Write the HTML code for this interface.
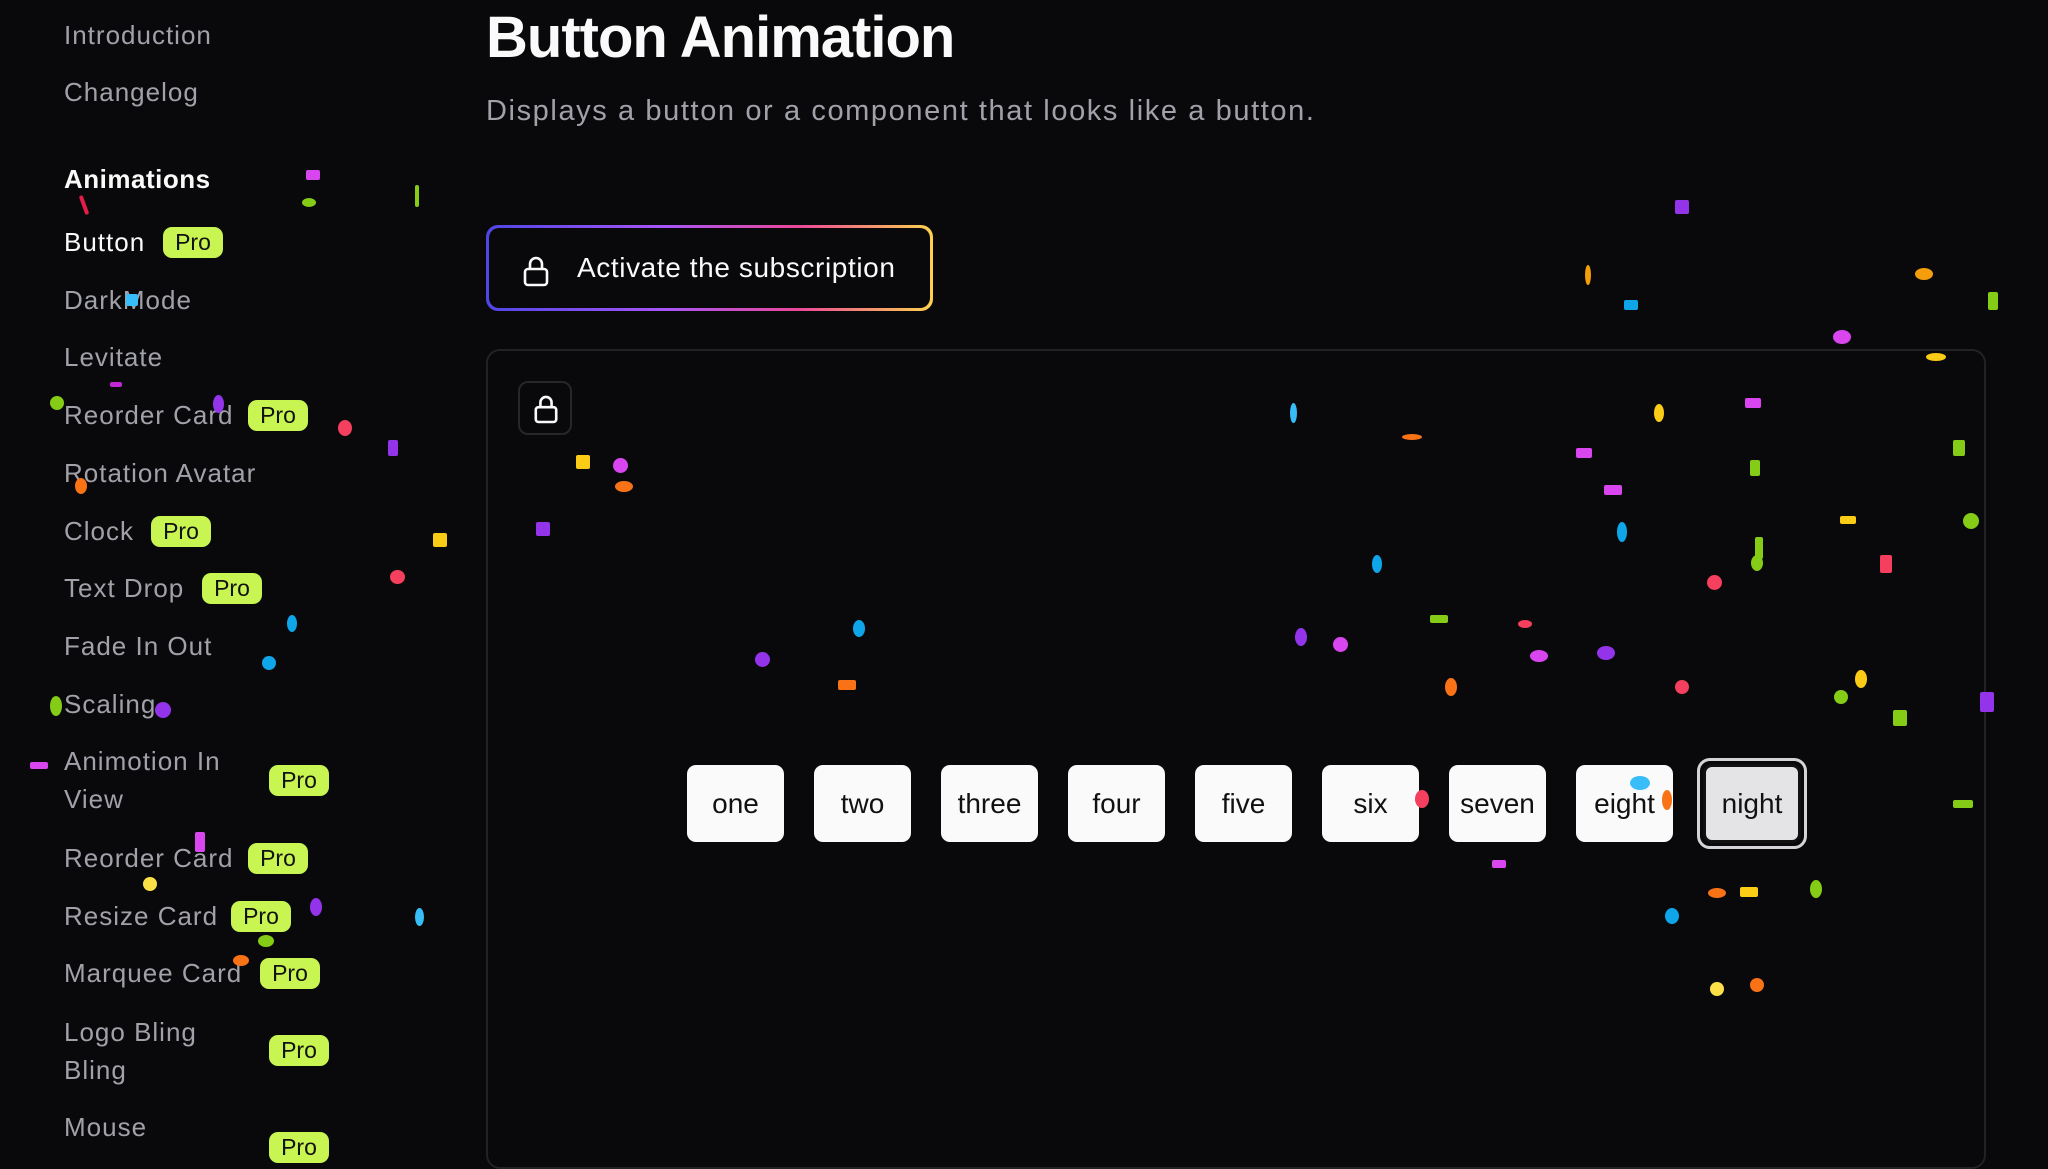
<!DOCTYPE html>
<html><head><meta charset="utf-8"><style>
*{margin:0;padding:0;box-sizing:border-box}
body{width:2048px;height:1147px;background:#09090b;overflow:hidden;position:relative;font-family:"Liberation Sans",sans-serif;color:#a1a1aa}
.s{position:absolute;left:64px;font-size:26px;line-height:38px;color:#a1a1aa;white-space:nowrap;letter-spacing:1px}
.w{color:#fafafa}
.pro{position:absolute;width:60px;height:31px;border-radius:9px;background:#c8f552;color:#111;font-size:23px;line-height:31px;text-align:center}
h1{position:absolute;left:486px;top:4px;font-size:58px;font-weight:bold;color:#fafafa;letter-spacing:-1px}
.sub{position:absolute;left:486px;top:95px;font-size:29px;color:#a1a1aa;letter-spacing:1.6px}
.gb{position:absolute;left:486px;top:225px;width:447px;height:86px;border-radius:12px;background:linear-gradient(90deg,#4f46e5,#a855f7 40%,#ec4899 70%,#fcd34d);padding:3px}
.gb div{width:100%;height:100%;border-radius:10px;background:#09090b;color:#fafafa;font-size:28px;line-height:80px;padding-left:88px;position:relative;letter-spacing:0.6px}
.card{position:absolute;left:486px;top:349px;width:1500px;height:820px;border:2px solid #222226;border-radius:14px}
.lk{position:absolute;left:518px;top:381px;width:54px;height:54px;border:2px solid #27272a;border-radius:10px}
.b{position:absolute;top:765px;width:97px;height:77px;background:#fafafa;border-radius:9px;color:#111;font-size:28px;line-height:77px;text-align:center}
.c{position:absolute;border-radius:2px}
</style></head><body>
<div class="s" style="top:16px">Introduction</div>
<div class="s" style="top:73px">Changelog</div>
<div class="s w" style="top:160px;font-weight:bold;letter-spacing:0.5px">Animations</div>
<div class="s w" style="top:223px">Button</div><div class="pro" style="left:163px;top:227px">Pro</div>
<div class="s" style="top:281px">DarkMode</div>
<div class="s" style="top:338px">Levitate</div>
<div class="s" style="top:396px">Reorder Card</div><div class="pro" style="left:248px;top:400px">Pro</div>
<div class="s" style="top:454px">Rotation Avatar</div>
<div class="s" style="top:512px">Clock</div><div class="pro" style="left:151px;top:516px">Pro</div>
<div class="s" style="top:569px">Text Drop</div><div class="pro" style="left:202px;top:573px">Pro</div>
<div class="s" style="top:627px">Fade In Out</div>
<div class="s" style="top:685px">Scaling</div>
<div class="s" style="top:742px">Animotion In<br>View</div><div class="pro" style="left:269px;top:765px">Pro</div>
<div class="s" style="top:839px">Reorder Card</div><div class="pro" style="left:248px;top:843px">Pro</div>
<div class="s" style="top:897px">Resize Card</div><div class="pro" style="left:231px;top:901px">Pro</div>
<div class="s" style="top:954px">Marquee Card</div><div class="pro" style="left:260px;top:958px">Pro</div>
<div class="s" style="top:1013px">Logo Bling<br>Bling</div><div class="pro" style="left:269px;top:1035px">Pro</div>
<div class="s" style="top:1108px">Mouse</div><div class="pro" style="left:269px;top:1132px">Pro</div>

<h1>Button Animation</h1>
<div class="sub">Displays a button or a component that looks like a button.</div>
<div class="gb"><div><svg style="position:absolute;left:33px;top:27px" width="28" height="32" viewBox="0 0 28 32" fill="none" stroke="#fafafa" stroke-width="2.6"><rect x="3" y="14" width="22" height="16" rx="3"/><path d="M8 14V9a6 6 0 0 1 12 0v5"/></svg>Activate the subscription</div></div>
<div class="card"></div>
<div class="lk"><svg style="position:absolute;left:13px;top:11px" width="26" height="30" viewBox="0 0 28 32" fill="none" stroke="#fafafa" stroke-width="2.8"><rect x="3" y="14" width="22" height="16" rx="3"/><path d="M8 14V9a6 6 0 0 1 12 0v5"/></svg></div>
<div class="b" style="left:687px">one</div>
<div class="b" style="left:814px">two</div>
<div class="b" style="left:941px">three</div>
<div class="b" style="left:1068px">four</div>
<div class="b" style="left:1195px">five</div>
<div class="b" style="left:1322px">six</div>
<div class="b" style="left:1449px">seven</div>
<div class="b" style="left:1576px">eight</div>
<div style="position:absolute;left:1697px;top:758px;width:110px;height:91px;border:3px solid #d4d4d8;border-radius:13px;padding:3px"><div style="width:100%;height:100%;background:#e4e4e7;border:3px solid #111;border-radius:9px;color:#111;font-size:28px;line-height:73px;text-align:center">night</div></div>

<div class="c" style="left:306px;top:170px;width:14px;height:10px;background:#d946ef"></div>
<div class="c" style="left:302px;top:198px;width:14px;height:9px;background:#84cc16;border-radius:50%"></div>
<div class="c" style="left:415px;top:185px;width:4px;height:22px;background:#84cc16"></div>
<div class="c" style="left:82px;top:195px;width:4px;height:20px;background:#e11d48;transform:rotate(-20deg)"></div>
<div class="c" style="left:126px;top:294px;width:12px;height:12px;background:#38bdf8"></div>
<div class="c" style="left:110px;top:382px;width:12px;height:5px;background:#c026d3"></div>
<div class="c" style="left:50px;top:396px;width:14px;height:14px;background:#84cc16;border-radius:50%"></div>
<div class="c" style="left:213px;top:395px;width:11px;height:18px;background:#9333ea;border-radius:50%"></div>
<div class="c" style="left:338px;top:420px;width:14px;height:16px;background:#f43f5e;border-radius:50%"></div>
<div class="c" style="left:388px;top:440px;width:10px;height:16px;background:#9333ea"></div>
<div class="c" style="left:75px;top:478px;width:12px;height:16px;background:#f97316;border-radius:50%"></div>
<div class="c" style="left:433px;top:533px;width:14px;height:14px;background:#facc15"></div>
<div class="c" style="left:390px;top:570px;width:15px;height:14px;background:#f43f5e;border-radius:50%"></div>
<div class="c" style="left:287px;top:615px;width:10px;height:17px;background:#0ea5e9;border-radius:50%"></div>
<div class="c" style="left:262px;top:656px;width:14px;height:14px;background:#0ea5e9;border-radius:50%"></div>
<div class="c" style="left:155px;top:702px;width:16px;height:16px;background:#9333ea;border-radius:50%"></div>
<div class="c" style="left:50px;top:696px;width:12px;height:20px;background:#84cc16;border-radius:50%"></div>
<div class="c" style="left:30px;top:762px;width:18px;height:7px;background:#d946ef"></div>
<div class="c" style="left:195px;top:832px;width:10px;height:20px;background:#d946ef"></div>
<div class="c" style="left:143px;top:877px;width:14px;height:14px;background:#fde047;border-radius:50%"></div>
<div class="c" style="left:258px;top:935px;width:16px;height:12px;background:#84cc16;border-radius:50%"></div>
<div class="c" style="left:233px;top:955px;width:16px;height:11px;background:#f97316;border-radius:50%"></div>
<div class="c" style="left:310px;top:898px;width:12px;height:18px;background:#9333ea;border-radius:50%"></div>
<div class="c" style="left:415px;top:908px;width:9px;height:18px;background:#38bdf8;border-radius:50%"></div>
<div class="c" style="left:576px;top:455px;width:14px;height:14px;background:#facc15"></div>
<div class="c" style="left:613px;top:458px;width:15px;height:15px;background:#d946ef;border-radius:50%"></div>
<div class="c" style="left:615px;top:481px;width:18px;height:11px;background:#f97316;border-radius:50%"></div>
<div class="c" style="left:536px;top:522px;width:14px;height:14px;background:#9333ea"></div>
<div class="c" style="left:755px;top:652px;width:15px;height:15px;background:#9333ea;border-radius:50%"></div>
<div class="c" style="left:853px;top:620px;width:12px;height:17px;background:#0ea5e9;border-radius:50%"></div>
<div class="c" style="left:838px;top:680px;width:18px;height:10px;background:#f97316"></div>
<div class="c" style="left:1290px;top:403px;width:7px;height:20px;background:#38bdf8;border-radius:50%"></div>
<div class="c" style="left:1402px;top:434px;width:20px;height:6px;background:#f97316;border-radius:50%"></div>
<div class="c" style="left:1372px;top:555px;width:10px;height:18px;background:#0ea5e9;border-radius:50%"></div>
<div class="c" style="left:1295px;top:628px;width:12px;height:18px;background:#9333ea;border-radius:50%"></div>
<div class="c" style="left:1333px;top:637px;width:15px;height:15px;background:#d946ef;border-radius:50%"></div>
<div class="c" style="left:1445px;top:678px;width:12px;height:18px;background:#f97316;border-radius:50%"></div>
<div class="c" style="left:1530px;top:650px;width:18px;height:12px;background:#d946ef;border-radius:50%"></div>
<div class="c" style="left:1597px;top:646px;width:18px;height:14px;background:#9333ea;border-radius:50%"></div>
<div class="c" style="left:1707px;top:575px;width:15px;height:15px;background:#f43f5e;border-radius:50%"></div>
<div class="c" style="left:1751px;top:555px;width:12px;height:16px;background:#84cc16;border-radius:50%"></div>
<div class="c" style="left:1654px;top:404px;width:10px;height:18px;background:#facc15;border-radius:50%"></div>
<div class="c" style="left:1833px;top:330px;width:18px;height:14px;background:#d946ef;border-radius:50%"></div>
<div class="c" style="left:1926px;top:353px;width:20px;height:8px;background:#facc15;border-radius:50%"></div>
<div class="c" style="left:1963px;top:513px;width:16px;height:16px;background:#84cc16;border-radius:50%"></div>
<div class="c" style="left:1880px;top:555px;width:12px;height:18px;background:#f43f5e"></div>
<div class="c" style="left:1855px;top:670px;width:12px;height:18px;background:#facc15;border-radius:50%"></div>
<div class="c" style="left:1834px;top:690px;width:14px;height:14px;background:#84cc16;border-radius:50%"></div>
<div class="c" style="left:1675px;top:680px;width:14px;height:14px;background:#f43f5e;border-radius:50%"></div>
<div class="c" style="left:1415px;top:790px;width:14px;height:18px;background:#f43f5e;border-radius:50%"></div>
<div class="c" style="left:1630px;top:776px;width:20px;height:14px;background:#38bdf8;border-radius:50%"></div>
<div class="c" style="left:1662px;top:790px;width:10px;height:20px;background:#f97316;border-radius:50%"></div>
<div class="c" style="left:1665px;top:908px;width:14px;height:16px;background:#0ea5e9;border-radius:50%"></div>
<div class="c" style="left:1708px;top:888px;width:18px;height:10px;background:#f97316;border-radius:50%"></div>
<div class="c" style="left:1740px;top:887px;width:18px;height:10px;background:#facc15"></div>
<div class="c" style="left:1710px;top:982px;width:14px;height:14px;background:#fde047;border-radius:50%"></div>
<div class="c" style="left:1750px;top:978px;width:14px;height:14px;background:#f97316;border-radius:50%"></div>
<div class="c" style="left:1810px;top:880px;width:12px;height:18px;background:#84cc16;border-radius:50%"></div>
<div class="c" style="left:1492px;top:860px;width:14px;height:8px;background:#d946ef"></div>
<div class="c" style="left:1675px;top:200px;width:14px;height:14px;background:#9333ea"></div>
<div class="c" style="left:1585px;top:265px;width:6px;height:20px;background:#f59e0b;border-radius:50%"></div>
<div class="c" style="left:1915px;top:268px;width:18px;height:12px;background:#f59e0b;border-radius:50%"></div>
<div class="c" style="left:1988px;top:292px;width:10px;height:18px;background:#84cc16"></div>
<div class="c" style="left:1624px;top:300px;width:14px;height:10px;background:#0ea5e9"></div>
<div class="c" style="left:1745px;top:398px;width:16px;height:10px;background:#d946ef"></div>
<div class="c" style="left:1576px;top:448px;width:16px;height:10px;background:#d946ef"></div>
<div class="c" style="left:1604px;top:485px;width:18px;height:10px;background:#d946ef"></div>
<div class="c" style="left:1750px;top:460px;width:10px;height:16px;background:#84cc16"></div>
<div class="c" style="left:1953px;top:440px;width:12px;height:16px;background:#84cc16"></div>
<div class="c" style="left:1840px;top:516px;width:16px;height:8px;background:#facc15"></div>
<div class="c" style="left:1430px;top:615px;width:18px;height:8px;background:#84cc16"></div>
<div class="c" style="left:1518px;top:620px;width:14px;height:8px;background:#f43f5e;border-radius:50%"></div>
<div class="c" style="left:1617px;top:522px;width:10px;height:20px;background:#0ea5e9;border-radius:50%"></div>
<div class="c" style="left:1755px;top:537px;width:8px;height:22px;background:#84cc16"></div>
<div class="c" style="left:1980px;top:692px;width:14px;height:20px;background:#9333ea"></div>
<div class="c" style="left:1893px;top:710px;width:14px;height:16px;background:#84cc16"></div>
<div class="c" style="left:1953px;top:800px;width:20px;height:8px;background:#84cc16"></div>
</body></html>
